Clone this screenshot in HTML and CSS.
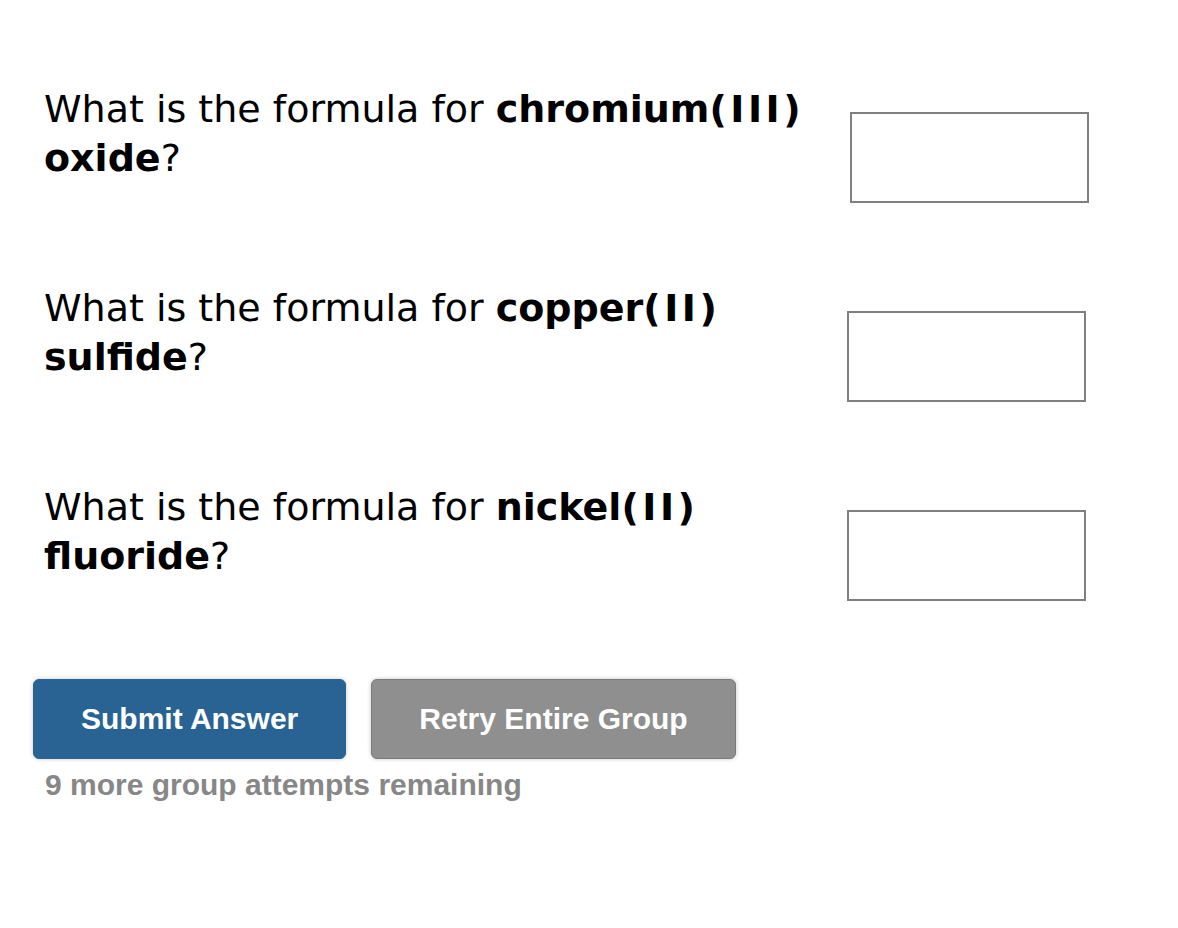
FILE: index.html
```html
<!DOCTYPE html>
<html lang="en">
<head>
<meta charset="utf-8">
<title>Formula questions</title>
<link rel="stylesheet" href="styles.css">
</head>
<body>
<main class="page">
  <section class="questions">
    <div class="question">
      <p class="question-text">What is the formula for <b>chromium<span class="numeral">(III)</span> oxide</b>?</p>
      <input class="answer answer--wide" type="text" aria-label="chromium(III) oxide">
    </div>
    <div class="question">
      <p class="question-text">What is the formula for <b>copper<span class="numeral">(II)</span> sulfide</b>?</p>
      <input class="answer" type="text" aria-label="copper(II) sulfide">
    </div>
    <div class="question">
      <p class="question-text">What is the formula for <b>nickel<span class="numeral">(II)</span> fluoride</b>?</p>
      <input class="answer" type="text" aria-label="nickel(II) fluoride">
    </div>
  </section>
  <div class="actions">
    <button class="btn btn--primary" type="button">Submit Answer</button>
    <button class="btn btn--secondary" type="button">Retry Entire Group</button>
  </div>
  <p class="attempts">9 more group attempts remaining</p>
</main>
</body>
</html>
```
FILE: styles.css
```css
html, body {
  margin: 0;
  padding: 0;
  background: #ffffff;
}

.page {
  padding: 85px 0 0 33px;
}

.questions {
  display: flex;
  flex-direction: column;
  gap: 81px;
  padding-left: 11px;
}

.question {
  display: flex;
  align-items: flex-start;
}

.question-text {
  margin: 0;
  width: 780px;
  font-family: Verdana, "DejaVu Sans", sans-serif;
  font-size: 38px;
  line-height: 49px;
  color: #000;
}

.question-text b {
  font-weight: bold;
}

.numeral {
  letter-spacing: 3.5px;
}

.answer {
  box-sizing: border-box;
  width: 239px;
  height: 91px;
  margin: 27px 0 0 23px;
  border: 2px solid #808080;
  border-radius: 0;
  background: #fff;
  padding: 0;
  outline: none;
}

.answer--wide {
  margin-left: 26px;
}

.actions {
  display: flex;
  gap: 25px;
  margin-top: 78px;
}

.btn {
  box-sizing: border-box;
  height: 80px;
  padding: 0 47px;
  border-radius: 6px;
  font-family: Arial, "Liberation Sans", sans-serif;
  font-weight: bold;
  font-size: 30px;
  color: #fff;
  box-shadow: 0 0 4px rgba(0, 0, 0, 0.22);
  cursor: pointer;
}

.btn--primary {
  background: #296393;
  border: 1px solid #296393;
}

.btn--secondary {
  background: #8f8f8f;
  border: 1px solid #7a7a7a;
}

.attempts {
  margin: 9px 0 0 12px;
  font-family: Arial, "Liberation Sans", sans-serif;
  font-weight: bold;
  font-size: 30px;
  color: #878787;
}
```
